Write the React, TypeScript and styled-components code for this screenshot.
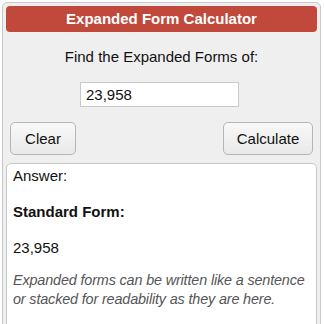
import styled, { createGlobalStyle } from 'styled-components'

const GlobalStyle = createGlobalStyle`
	html, body {
		margin: 0;
		padding: 0;
		background: #ffffff;
		font-family: "Liberation Sans", Arial, sans-serif;
	}
`

const Panel = styled.div`
	margin: 2px 3px 0 2px;
	height: 330px;
	border: 1px solid #c8c8c8;
	border-radius: 5px;
	background: #efefef;
	padding: 3px 3px 0 3px;
	box-sizing: border-box;
	overflow: hidden;
`

const Header = styled.h1`
	margin: 0;
	height: 26px;
	line-height: 26px;
	border-radius: 4px;
	background: #c0493b;
	color: #ffffff;
	font-size: 15px;
	font-weight: bold;
	text-align: center;
`

const Prompt = styled.p`
	margin: 16px 0 0;
	font-size: 15px;
	line-height: 18px;
	color: #111;
	text-align: center;
`

const InputRow = styled.div`
	display: flex;
	justify-content: center;
	margin-top: 16px;
	padding-right: 4px;
`

const NumberInput = styled.input`
	width: 159px;
	height: 25px;
	box-sizing: border-box;
	border: 1px solid #c9c9c9;
	background: #fff;
	padding: 0 5px;
	font-family: "Liberation Sans", Arial, sans-serif;
	font-size: 15px;
	color: #111;
	outline: none;
`

const ButtonRow = styled.div`
	display: flex;
	justify-content: space-between;
	margin-top: 15px;
	padding: 0 4px;
`

const Button = styled.button<{ $width: number }>`
	width: ${(p) => p.$width}px;
	height: 33px;
	border: 1px solid #b5b5b5;
	border-radius: 5px;
	background: linear-gradient(#f8f8f8, #e9e9e9);
	font-family: "Liberation Sans", Arial, sans-serif;
	font-size: 15px;
	color: #111;
	padding: 0;
`

const AnswerBox = styled.div`
	margin-top: 8px;
	background: #fff;
	border: 1px solid #c8c8c8;
	border-radius: 5px 5px 0 0;
	padding: 2px 2px 20px 6px;
	font-size: 15px;
	line-height: 19px;
	color: #111;
`

const Line = styled.p`
	margin: 0 0 17px;
`

const Bold = styled(Line)`
	font-weight: bold;
`

const Note = styled(Line)`
	margin-top: -3px;
	font-style: italic;
	font-size: 14.4px;
	letter-spacing: -0.15px;
	color: #555;
`

const App = () => {
	return (
		<>
			<GlobalStyle />
			<Panel>
				<Header>Expanded Form Calculator</Header>
				<Prompt>Find the Expanded Forms of:</Prompt>
				<InputRow>
					<NumberInput defaultValue="23,958" />
				</InputRow>
				<ButtonRow>
					<Button $width={66}>Clear</Button>
					<Button $width={90}>Calculate</Button>
				</ButtonRow>
				<AnswerBox>
					<Line>Answer:</Line>
					<Bold>Standard Form:</Bold>
					<Line>23,958</Line>
					<Note>
						Expanded forms can be written like a sentence or stacked for
						readability as they are here.
					</Note>
				</AnswerBox>
			</Panel>
		</>
	)
}

export default App
